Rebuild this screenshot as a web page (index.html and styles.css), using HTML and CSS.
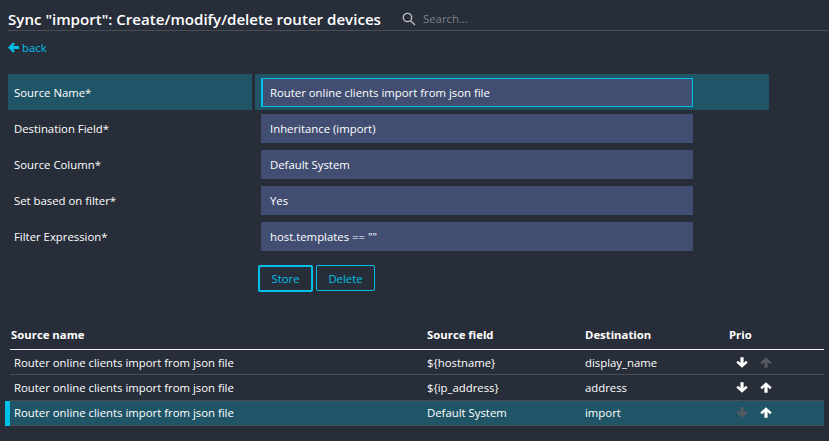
FILE: index.html
```html
<!DOCTYPE html>
<html lang="en">
<head>
    <meta charset="UTF-8">
    <title>Sync import</title>
    <link rel="stylesheet" href="styles.css">
</head>
<body>
    <div class="header">
        <h1>Sync "import": Create/modify/delete router devices</h1>
        <div class="search">
            <svg class="search-icon" width="14" height="14" viewBox="0 0 14 14"><circle cx="5.5" cy="5.5" r="4.2"/><path d="M8.6 8.6 L13 13"/></svg>
            <span>Search...</span>
        </div>
    </div>

    <a class="back" href="#">
        <svg width="11" height="11" viewBox="0 0 11 11"><path d="M5.2 .2 L7 2 L4.9 4 H11 V7 H4.9 L7 9 L5.2 10.8 L0 5.5 Z"/></svg>
        back
    </a>

    <form class="sync-form">
        <div class="row active">
            <label>Source Name*</label>
            <div class="value"><div class="input focus">Router online clients import from json file</div></div>
        </div>
        <div class="row">
            <label>Destination Field*</label>
            <div class="value"><div class="input">Inheritance (import)</div></div>
        </div>
        <div class="row">
            <label>Source Column*</label>
            <div class="value"><div class="input">Default System</div></div>
        </div>
        <div class="row">
            <label>Set based on filter*</label>
            <div class="value"><div class="input">Yes</div></div>
        </div>
        <div class="row">
            <label>Filter Expression*</label>
            <div class="value"><div class="input">host.templates == ""</div></div>
        </div>
        <div class="buttons">
            <button type="button" class="btn btn-store">Store</button>
            <button type="button" class="btn">Delete</button>
        </div>
    </form>

    <div class="table">
        <div class="tr th">
            <div>Source name</div>
            <div>Source field</div>
            <div>Destination</div>
            <div>Prio</div>
        </div>
        <div class="tr">
            <div>Router online clients import from json file</div>
            <div>${hostname}</div>
            <div>display_name</div>
            <div class="prio">
                <svg class="arrow" viewBox="0 0 12 11"><path d="M6 10.8 L.3 5.5 L2.1 3.8 L4.4 5.9 V.2 H7.6 V5.9 L9.9 3.8 L11.7 5.5 Z"/></svg>
                <svg class="arrow off" viewBox="0 0 12 11"><path d="M6 .2 L.3 5.5 L2.1 7.2 L4.4 5.1 V10.8 H7.6 V5.1 L9.9 7.2 L11.7 5.5 Z"/></svg>
            </div>
        </div>
        <div class="tr">
            <div>Router online clients import from json file</div>
            <div>${ip_address}</div>
            <div>address</div>
            <div class="prio">
                <svg class="arrow" viewBox="0 0 12 11"><path d="M6 10.8 L.3 5.5 L2.1 3.8 L4.4 5.9 V.2 H7.6 V5.9 L9.9 3.8 L11.7 5.5 Z"/></svg>
                <svg class="arrow" viewBox="0 0 12 11"><path d="M6 .2 L.3 5.5 L2.1 7.2 L4.4 5.1 V10.8 H7.6 V5.1 L9.9 7.2 L11.7 5.5 Z"/></svg>
            </div>
        </div>
        <div class="tr selected">
            <div>Router online clients import from json file</div>
            <div>Default System</div>
            <div>import</div>
            <div class="prio">
                <svg class="arrow off" viewBox="0 0 12 11"><path d="M6 10.8 L.3 5.5 L2.1 3.8 L4.4 5.9 V.2 H7.6 V5.9 L9.9 3.8 L11.7 5.5 Z"/></svg>
                <svg class="arrow" viewBox="0 0 12 11"><path d="M6 .2 L.3 5.5 L2.1 7.2 L4.4 5.1 V10.8 H7.6 V5.1 L9.9 7.2 L11.7 5.5 Z"/></svg>
            </div>
        </div>
    </div>
</body>
</html>
```

FILE: styles.css
```css
*{
    box-sizing: border-box;
    padding: 0;
    margin: 0;
}
html, body{
    height: 100%;
    overflow: hidden;
}
body{
    background-color: #282e39;
    color: #fff;
    font-family: "Open Sans", "Noto Sans", sans-serif;
    font-size: 11.35px;
}
/* top bar */
.header{
    display: flex;
    align-items: center;
    height: 31px;
    margin-left: 8px;
    padding-top: 7px;
    border-bottom: 1px solid #4a4d52;
}
.header h1{
    font-size: 15.1px;
    font-weight: 600;
    width: 394px;
    white-space: nowrap;
}
.search{
    display: flex;
    align-items: center;
    gap: 7px;
    color: #7d8189;
}
.search-icon{
    fill: none;
    stroke: #c4c6ca;
    stroke-width: 1.3;
}
.back{
    display: flex;
    align-items: center;
    gap: 3px;
    margin: 8px 0 0 8px;
    height: 16px;
    color: #00bfe8;
    text-decoration: none;
}
.back svg{
    fill: #00bfe8;
}
/* form */
.sync-form{
    margin: 19px 0 0 8px;
    width: 761px;
}
.row{
    display: flex;
    height: 36px;
    align-items: center;
}
.row label{
    display: flex;
    align-items: center;
    width: 244px;
    height: 36px;
    padding-left: 6px;
}
.value{
    display: flex;
    align-items: center;
    flex: 1;
    height: 36px;
    margin-left: 3px;
    padding-left: 6px;
}
.input{
    display: flex;
    align-items: center;
    width: 432px;
    height: 29px;
    padding-left: 9px;
    background-color: #414e72;
}
.input.focus{
    border: 1px solid #00bfe8;
    border-left-width: 2px;
    padding-left: 7px;
}
.active label, .active .value{
    background-color: #1f5567;
}
.buttons{
    display: flex;
    align-items: center;
    gap: 3px;
    margin: 10px 0 0 250px;
    height: 28px;
}
.btn{
    width: 59px;
    height: 26px;
    background: none;
    border: 1px solid #00bfe8;
    border-radius: 2px;
    color: #00bfe8;
    font-family: inherit;
    font-size: 11.35px;
}
.btn-store{
    width: 55px;
    height: 27px;
    border-width: 2px;
}
/* table */
.table{
    margin: 34px 5px 0 10px;
}
.tr{
    position: relative;
    display: grid;
    grid-template-columns: 413px 158px 144px 1fr;
    align-items: center;
    height: 25.4px;
    padding-left: 4px;
    border-bottom: 1px solid #4a4d52;
}
.th{
    font-weight: 700;
    height: 24px;
    padding: 0 0 7px 0;
    border-bottom: 1px solid #f5f5f5;
    grid-template-columns: 417px 158px 144px 1fr;
}
.th div:first-child{
    padding-left: 1px;
}
.selected{
    background-color: #1f5567;
}
/* cyan marker in front of the selected row */
.selected::before{
    content: "";
    position: absolute;
    left: -5px;
    top: 0;
    bottom: -1px;
    width: 5px;
    background-color: #00bfe8;
}
.prio{
    display: flex;
    gap: 12px;
    padding-left: 7px;
}
.arrow{
    width: 12px;
    height: 11px;
    fill: #fff;
}
.arrow.off{
    fill: #555960;
}
```
